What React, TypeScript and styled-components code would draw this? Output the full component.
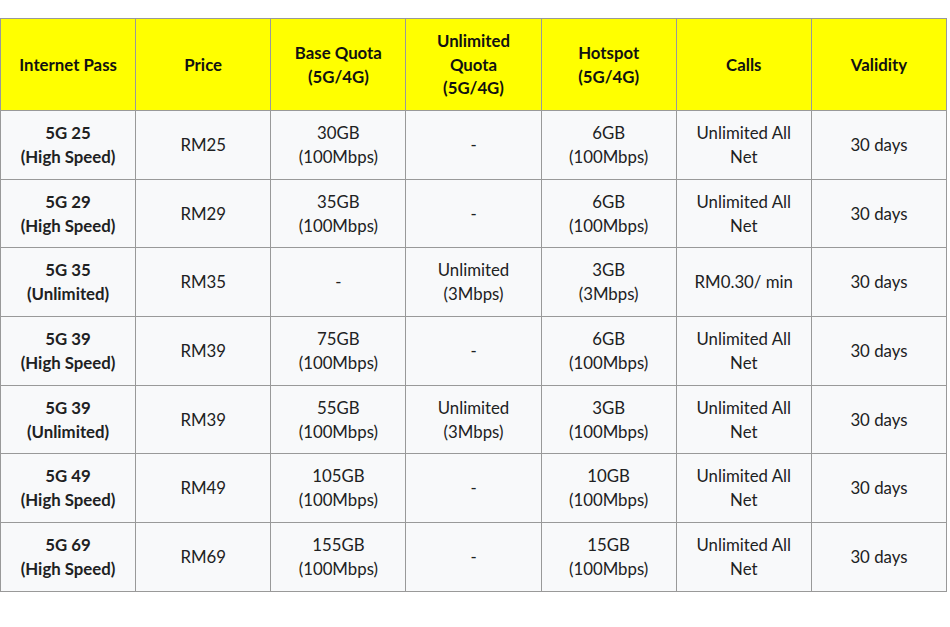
import React from "react";
import styled, { createGlobalStyle } from "styled-components";

const Global = createGlobalStyle`
  html, body { margin: 0; padding: 0; background: #ffffff; }
  body { font-family: Lato, "Noto Sans", sans-serif; }
`;

const Page = styled.div`
  padding-top: 18px;
`;

const Table = styled.table`
  border-collapse: collapse;
  width: 947px;
  table-layout: fixed;
  color: #202122;
  font-family: Lato, "Noto Sans", sans-serif;
  font-size: 16.8px;
  line-height: 24px;
`;

const HeadCell = styled.th`
  background: #ffff00;
  border: 1px solid #999999;
  height: 91px;
  padding: 0 6px;
  text-align: center;
  vertical-align: middle;
  font-weight: 700;
  line-height: 23.5px;
  color: #111;
`;

const Cell = styled.td<{ $bold?: boolean }>`
  background: #f8f9fa;
  border: 1px solid #999999;
  height: 67.7px;
  padding: 0 6px;
  text-align: center;
  vertical-align: middle;
  font-weight: ${(p) => (p.$bold ? 700 : 400)};
`;

const headers = [
  ["Internet Pass"],
  ["Price"],
  ["Base Quota", "(5G/4G)"],
  ["Unlimited", "Quota", "(5G/4G)"],
  ["Hotspot", "(5G/4G)"],
  ["Calls"],
  ["Validity"],
];

type Row = string[][];
const rows: Row[] = [
  [["5G 25", "(High Speed)"], ["RM25"], ["30GB", "(100Mbps)"], ["-"], ["6GB", "(100Mbps)"], ["Unlimited All", "Net"], ["30 days"]],
  [["5G 29", "(High Speed)"], ["RM29"], ["35GB", "(100Mbps)"], ["-"], ["6GB", "(100Mbps)"], ["Unlimited All", "Net"], ["30 days"]],
  [["5G 35", "(Unlimited)"], ["RM35"], ["-"], ["Unlimited", "(3Mbps)"], ["3GB", "(3Mbps)"], ["RM0.30/ min"], ["30 days"]],
  [["5G 39", "(High Speed)"], ["RM39"], ["75GB", "(100Mbps)"], ["-"], ["6GB", "(100Mbps)"], ["Unlimited All", "Net"], ["30 days"]],
  [["5G 39", "(Unlimited)"], ["RM39"], ["55GB", "(100Mbps)"], ["Unlimited", "(3Mbps)"], ["3GB", "(100Mbps)"], ["Unlimited All", "Net"], ["30 days"]],
  [["5G 49", "(High Speed)"], ["RM49"], ["105GB", "(100Mbps)"], ["-"], ["10GB", "(100Mbps)"], ["Unlimited All", "Net"], ["30 days"]],
  [["5G 69", "(High Speed)"], ["RM69"], ["155GB", "(100Mbps)"], ["-"], ["15GB", "(100Mbps)"], ["Unlimited All", "Net"], ["30 days"]],
];

const Lines = ({ lines }: { lines: string[] }) => (
  <>
    {lines.map((l, i) => (
      <React.Fragment key={i}>
        {i > 0 && <br />}
        {l}
      </React.Fragment>
    ))}
  </>
);

export default function App() {
  return (
    <Page>
      <Global />
      <Table>
        <thead>
          <tr>
            {headers.map((h, i) => (
              <HeadCell key={i}>
                <Lines lines={h} />
              </HeadCell>
            ))}
          </tr>
        </thead>
        <tbody>
          {rows.map((r, ri) => (
            <tr key={ri}>
              {r.map((c, ci) => (
                <Cell key={ci} $bold={ci === 0}>
                  <Lines lines={c} />
                </Cell>
              ))}
            </tr>
          ))}
        </tbody>
      </Table>
    </Page>
  );
}
